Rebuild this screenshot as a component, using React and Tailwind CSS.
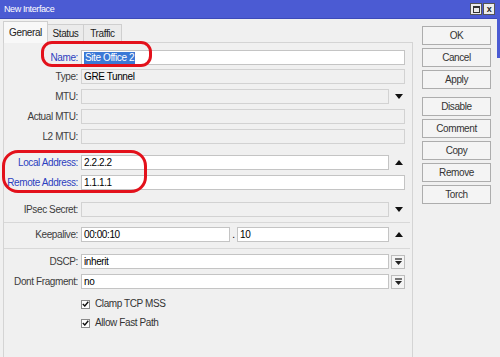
import React from 'react';

const Arrow = ({ up }) => (
  <div className="w-[20px] flex justify-center items-center">
    <svg width="8" height="5" viewBox="0 0 8 5">
      {up ? <path d="M0 5 L4 0 L8 5 Z" fill="#111" /> : <path d="M0 0 L8 0 L4 5 Z" fill="#111" />}
    </svg>
  </div>
);

const ComboBtn = () => (
  <div className="ml-[2px] w-[14px] h-[14px] border border-[#bdbdbd] bg-[#f4f4f4] flex items-center justify-center">
    <svg width="7" height="8" viewBox="0 0 7 8">
      <path d="M0 1 H7" stroke="#222" strokeWidth="1.2" />
      <path d="M0 3 L7 3 L3.5 7 Z" fill="#222" />
    </svg>
  </div>
);

const Field = ({ value, ro, w = 'w-[324px]', children }) => (
  <div
    className={`${w} h-[15px] border flex items-center px-[2px] ${
      ro ? 'bg-[#f0f0f0] border-[#d2d2d2]' : 'bg-white border-[#c4c4c4]'
    } text-black`}
  >
    {children || value}
  </div>
);

const Row = ({ label, blue, className = '', children }) => (
  <div className={`flex items-center h-[15px] ${className}`}>
    <div className={`w-[77px] pr-[3px] text-right ${blue ? 'text-[#2d3fbf]' : 'text-[#3c3c3c]'}`}>{label}:</div>
    {children}
  </div>
);

const Check = ({ label, className = '' }) => (
  <div className={`flex items-center h-[12px] pl-[77px] ${className}`}>
    <div className="w-[9px] h-[9px] border border-[#8a8a8a] bg-white flex items-center justify-center">
      <svg width="7" height="6" viewBox="0 0 7 6">
        <path d="M0.8 3 L2.8 5 L6.3 0.8" stroke="#111" strokeWidth="1.4" fill="none" />
      </svg>
    </div>
    <span className="ml-[5px] text-[#333]">{label}</span>
  </div>
);

const buttons = [
  { name: 'OK', mt: 'mt-[7px]' },
  { name: 'Cancel', mt: 'mt-[3px]' },
  { name: 'Apply', mt: 'mt-[3px]' },
  { name: 'Disable', mt: 'mt-[8px]' },
  { name: 'Comment', mt: 'mt-[3px]' },
  { name: 'Copy', mt: 'mt-[3px]' },
  { name: 'Remove', mt: 'mt-[3px]' },
  { name: 'Torch', mt: 'mt-[3px]' },
];

export default function App() {
  return (
    <div className="relative w-[500px] h-[357px] overflow-hidden bg-[#f0f0f0] font-['Liberation_Sans',Arial,sans-serif] text-[10px] tracking-[-0.4px] leading-none">
      {/* title bar */}
      <div className="h-[19px] bg-[#4b5bd3] border-b border-[#3c4ab8] flex items-center pl-[4px] pr-[5px]">
        <span className="text-white text-[9px]">New Interface</span>
        <div className="ml-auto flex gap-[1px]">
          <div className="w-[12px] h-[12px] bg-[#ececec] border border-[#555] flex items-center justify-center">
            <div className="w-[7px] h-[7px] border border-[#333] border-t-2" />
          </div>
          <div className="w-[12px] h-[12px] bg-[#ececec] border border-[#555] flex items-center justify-center text-[9px] font-bold text-[#222]">
            x
          </div>
        </div>
      </div>
      <div className="absolute right-0 top-0 w-[3px] h-[58px] bg-[#4b5bd3]" />

      <div className="flex">
        {/* left side */}
        <div className="w-[413px] pl-[3px]">
          <div className="flex items-end h-[23px]">
            <div className="w-[45px] h-[22px] bg-[#f8f8f8] border border-b-0 border-[#cfcfcf] flex items-center justify-center text-[#222] relative top-[1px]">
              General
            </div>
            <div className="w-[36px] h-[18px] bg-[#ebebeb] border border-b-0 border-l-0 border-[#cfcfcf] flex items-center justify-center text-[#222]">
              Status
            </div>
            <div className="w-[38px] h-[18px] bg-[#ebebeb] border border-b-0 border-l-0 border-[#cfcfcf] flex items-center justify-center text-[#222]">
              Traffic
            </div>
          </div>
          <div className="h-[320px] border-t border-r border-l border-[#d4d4d4] pt-[7px]">
            <Row label="Name" blue>
              <Field>
                <span className="bg-[#3a78d6] text-white px-[1px] py-[1px]">Site Office 2</span>
              </Field>
            </Row>
            <Row label="Type" className="mt-[4px]">
              <Field ro value="GRE Tunnel" />
            </Row>
            <Row label="MTU" className="mt-[5px]">
              <Field ro w="w-[308px]" />
              <Arrow />
            </Row>
            <Row label="Actual MTU" className="mt-[5px]">
              <Field ro />
            </Row>
            <Row label="L2 MTU" className="mt-[5px]">
              <Field ro />
            </Row>
            <Row label="Local Address" blue className="mt-[11px]">
              <Field w="w-[308px]" value="2.2.2.2" />
              <Arrow up />
            </Row>
            <Row label="Remote Address" blue className="mt-[5px]">
              <Field value="1.1.1.1" />
            </Row>
            <Row label="IPsec Secret" className="mt-[12px]">
              <Field ro w="w-[308px]" />
              <Arrow />
            </Row>
            <div className="mt-[5px] border-t border-[#d8d8d8] mr-[2px]" />
            <Row label="Keepalive" className="mt-[4px]">
              <Field w="w-[149px]" value="00:00:10" />
              <span className="w-[7px] text-center text-black">.</span>
              <Field w="w-[152px]" value="10" />
              <Arrow up />
            </Row>
            <div className="mt-[6px] border-t border-[#d8d8d8] mr-[2px]" />
            <Row label="DSCP" className="mt-[5px]">
              <Field w="w-[308px]" value="inherit" />
              <ComboBtn />
            </Row>
            <Row label="Dont Fragment" className="mt-[5px]">
              <Field w="w-[308px]" value="no" />
              <ComboBtn />
            </Row>
            <Check label="Clamp TCP MSS" className="mt-[9px]" />
            <Check label="Allow Fast Path" className="mt-[7px]" />
          </div>
        </div>

        {/* right buttons */}
        <div className="ml-[9px] w-[69px] flex flex-col">
          {buttons.map((b) => (
            <div
              key={b.name}
              className={`${b.mt} h-[19px] bg-[#f4f4f4] border border-[#adadad] flex items-center justify-center text-[#333]`}
            >
              {b.name}
            </div>
          ))}
        </div>
      </div>

      {/* red annotations */}
      <div className="absolute left-[41px] top-[41px] w-[111px] h-[26px] border-[3px] border-[#e3111b] rounded-[11px]" />
      <div className="absolute left-[2px] top-[150px] w-[145px] h-[43px] border-[3px] border-[#e3111b] rounded-[16px]" />
    </div>
  );
}
